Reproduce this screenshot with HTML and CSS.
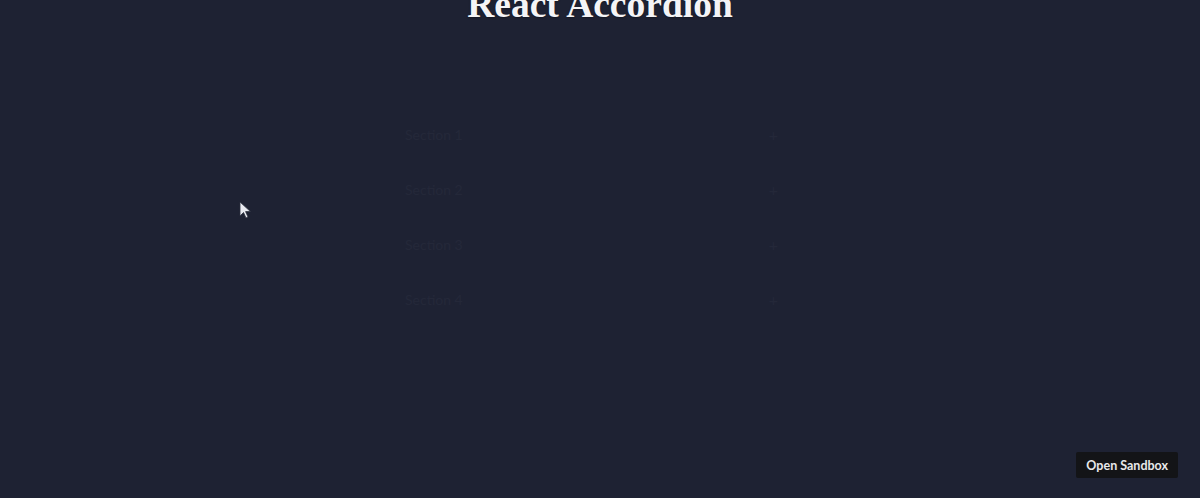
FILE: index.html
```html
<!DOCTYPE html>
<html lang="en">
<head>
<meta charset="utf-8">
<title>React Accordion</title>
<link rel="stylesheet" href="styles.css">
</head>
<body>
  <main class="app">
    <h1 class="title">React Accordion</h1>
    <section class="accordion">
      <div class="item">
        <span class="item-label">Section 1</span>
        <span class="item-toggle">+</span>
      </div>
      <div class="item">
        <span class="item-label">Section 2</span>
        <span class="item-toggle">+</span>
      </div>
      <div class="item">
        <span class="item-label">Section 3</span>
        <span class="item-toggle">+</span>
      </div>
      <div class="item">
        <span class="item-label">Section 4</span>
        <span class="item-toggle">+</span>
      </div>
    </section>
  </main>

  <!-- mouse pointer resting over the preview -->
  <svg class="pointer" width="14" height="20" viewBox="0 0 14 20" aria-hidden="true">
    <path d="M1 1 L1 15 L4.5 11.5 L7 17 L9 16 L6.6 10.6 L11.5 10.6 Z" fill="#e8eaf0" stroke="#2a2e3c" stroke-width="0.8"/>
  </svg>

  <a class="sandbox-btn" href="#">Open Sandbox</a>
</body>
</html>
```

FILE: styles.css
```css
html, body {
  margin: 0;
  height: 100%;
}

body {
  background: #1e2233;
  color: #ffffff;
  font-family: "Liberation Serif", "Times New Roman", serif;
  overflow: hidden;
  position: relative;
}

.app {
  display: flex;
  flex-direction: column;
  align-items: center;
}

.title {
  margin: -15px 0 0;
  font-size: 37.5px;
  font-weight: bold;
  line-height: 40px;
  color: #f4f4f6;
  text-shadow: 0 1px 2px rgba(0, 0, 0, 0.35);
}

.accordion {
  margin-top: 95px;
  width: 400px;
  display: flex;
  flex-direction: column;
  gap: 27px;
  opacity: 0.03;
  font-family: "Lato", sans-serif;
  font-size: 14px;
}

.item {
  display: flex;
  justify-content: space-between;
  align-items: center;
  height: 28px;
  padding: 0 22px 0 5px;
  color: #cfd6e6;
}

.item-toggle {
  font-size: 16px;
}

.pointer {
  position: absolute;
  left: 239px;
  top: 201px;
}

.sandbox-btn {
  position: absolute;
  right: 22px;
  bottom: 20px;
  height: 26px;
  padding: 0 10px;
  display: flex;
  align-items: center;
  background: #131417;
  border-radius: 2px;
  color: #e8e8ea;
  font-family: "Lato", "Noto Sans", sans-serif;
  font-weight: bold;
  font-size: 12.5px;
  text-decoration: none;
}
```
